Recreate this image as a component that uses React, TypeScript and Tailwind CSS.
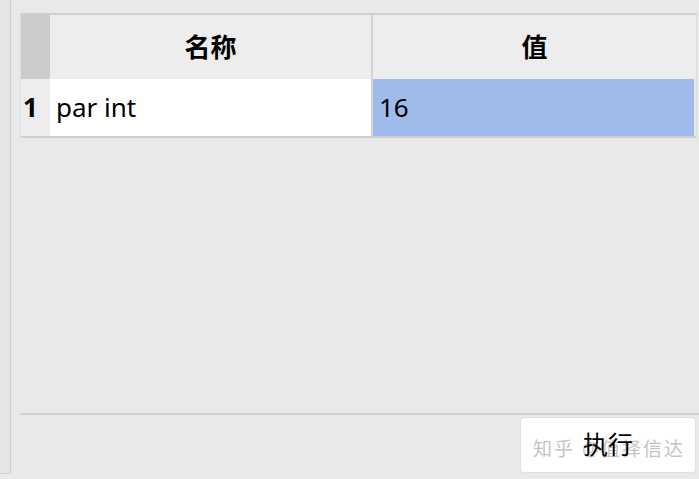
import React from "react";

const font = { fontFamily: '"Noto Sans", "Noto Sans CJK SC", sans-serif' };

export default function App() {
  return (
    <div
      className="w-[699px] h-[479px] bg-[#e9e9e9] flex overflow-hidden text-black"
      style={font}
    >
      <div className="w-[11px] h-[474px] bg-[#e5e5e5] border-r border-b border-[#cfcfcf] shrink-0" />
      <div className="flex-1 flex flex-col pl-[9px] pt-[13px] pb-[6px]">
        <div className="w-[677px] border-t-2 border-[#cfcfcf] border-r border-r-[#d9d9d9] border-l border-l-[#dedede]">
          <div className="flex h-[64px]">
            <div className="w-[29px] bg-[#cbcbcb]" />
            <div className="w-[323px] bg-[#ededed] border-r-2 border-[#d4d4d4] flex items-center justify-center text-[26px] font-bold">
              名称
            </div>
            <div className="flex-1 bg-[#ededed] flex items-center justify-center text-[26px] font-bold">
              值
            </div>
          </div>
          <div className="flex h-[59px] border-b-2 border-[#cfcfcf]">
            <div className="w-[29px] bg-[#ededed] flex items-center pl-[2px] text-[26px] font-bold">
              1
            </div>
            <div className="w-[323px] bg-white border-r-2 border-[#d4d4d4] flex items-center pl-[6px] text-[26px]">
              par int
            </div>
            <div className="flex-1 bg-[#9fbbe9] flex items-center pl-[6px] text-[26px] mr-[2px]">
              16
            </div>
          </div>
        </div>
        <div className="flex-1" />
        <div className="border-t-2 border-[#d0d0d0] h-[60px] flex justify-end pt-[2px] pr-[3px]">
          <div className="relative w-[176px] h-[56px] bg-white rounded-[4px] border border-[#e0e0e0] flex items-center justify-center">
            <span className="absolute left-[12px] top-[17px] text-[19px] text-[#c4c4c4] tracking-[2px] whitespace-nowrap">
              知乎 @值择信达
            </span>
            <span className="relative text-[25px]">执行</span>
          </div>
        </div>
      </div>
    </div>
  );
}
